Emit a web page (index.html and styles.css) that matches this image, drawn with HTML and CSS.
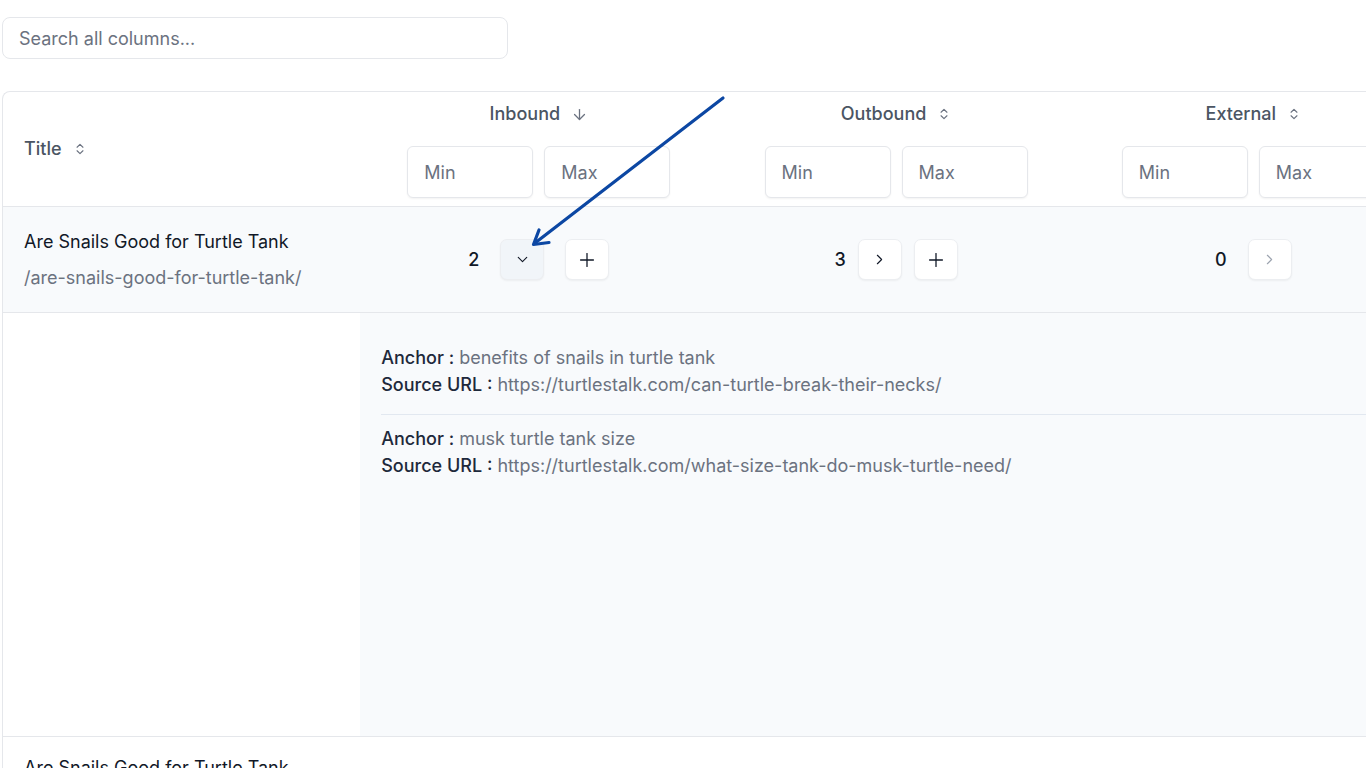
FILE: index.html
```html
<!DOCTYPE html>
<html lang="en">
<head>
    <meta charset="UTF-8">
    <meta name="viewport" content="width=device-width, initial-scale=1.0">
    <title>Internal Links</title>
    <link rel="stylesheet" href="styles.css">
</head>
<body>
    <div class="page">
        <!-- Search -->
        <div class="search-bar">
            <input type="text" class="search-input" placeholder="Search all columns...">
        </div>

        <!-- Links table -->
        <div class="table-wrap">
            <table class="links-table">
                <colgroup>
                    <col class="col-title">
                    <col class="col-num">
                    <col class="col-num">
                    <col class="col-num">
                </colgroup>
                <thead>
                    <tr>
                        <th class="th-title">
                            <span class="th-label">Title
                                <svg class="sort-icon" viewBox="0 0 24 24"><path d="m7 15 5 5 5-5"/><path d="m7 9 5-5 5 5"/></svg>
                            </span>
                        </th>
                        <th>
                            <div class="th-label">Inbound
                                <svg class="sort-icon active" viewBox="0 0 24 24"><path d="M12 5v14"/><path d="m19 12-7 7-7-7"/></svg>
                            </div>
                            <div class="range">
                                <input type="text" placeholder="Min">
                                <input type="text" placeholder="Max">
                            </div>
                        </th>
                        <th>
                            <div class="th-label">Outbound
                                <svg class="sort-icon" viewBox="0 0 24 24"><path d="m7 15 5 5 5-5"/><path d="m7 9 5-5 5 5"/></svg>
                            </div>
                            <div class="range">
                                <input type="text" placeholder="Min">
                                <input type="text" placeholder="Max">
                            </div>
                        </th>
                        <th>
                            <div class="th-label">External
                                <svg class="sort-icon" viewBox="0 0 24 24"><path d="m7 15 5 5 5-5"/><path d="m7 9 5-5 5 5"/></svg>
                            </div>
                            <div class="range">
                                <input type="text" placeholder="Min">
                                <input type="text" placeholder="Max">
                            </div>
                        </th>
                    </tr>
                </thead>
                <tbody>
                    <tr class="row-open">
                        <td class="cell-title">
                            <div class="post-title">Are Snails Good for Turtle Tank</div>
                            <div class="post-path">/are-snails-good-for-turtle-tank/</div>
                        </td>
                        <td>
                            <div class="count wide">
                                <span class="num">2</span>
                                <button class="icon-btn pressed"><svg viewBox="0 0 24 24"><path d="m6 9 6 6 6-6"/></svg></button>
                                <button class="icon-btn"><svg class="plus" viewBox="0 0 24 24"><path d="M5 12h14"/><path d="M12 5v14"/></svg></button>
                            </div>
                        </td>
                        <td>
                            <div class="count">
                                <span class="num">3</span>
                                <button class="icon-btn"><svg viewBox="0 0 24 24"><path d="m9 18 6-6-6-6"/></svg></button>
                                <button class="icon-btn"><svg class="plus" viewBox="0 0 24 24"><path d="M5 12h14"/><path d="M12 5v14"/></svg></button>
                            </div>
                        </td>
                        <td>
                            <div class="count wide">
                                <span class="num">0</span>
                                <button class="icon-btn disabled"><svg viewBox="0 0 24 24"><path d="m9 18 6-6-6-6"/></svg></button>
                            </div>
                        </td>
                    </tr>
                    <tr class="row-detail">
                        <td></td>
                        <td colspan="3" class="detail-cell">
                            <div class="detail-list">
                                <div class="link-item">
                                    <div><b>Anchor :</b> benefits of snails in turtle tank</div>
                                    <div><b>Source URL :</b> https://turtlestalk.com/can-turtle-break-their-necks/</div>
                                </div>
                                <div class="link-item">
                                    <div><b>Anchor :</b> musk turtle tank size</div>
                                    <div><b>Source URL :</b> https://turtlestalk.com/what-size-tank-do-musk-turtle-need/</div>
                                </div>
                            </div>
                        </td>
                    </tr>
                    <tr class="row-next">
                        <td class="cell-title">
                            <div class="post-title">Are Snails Good for Turtle Tank</div>
                        </td>
                        <td></td>
                        <td></td>
                        <td></td>
                    </tr>
                </tbody>
            </table>
        </div>
    </div>

    <!-- annotation arrow -->
    <svg class="annotation" viewBox="0 0 1366 768">
        <path d="M723 98 L535 243"/>
        <path d="M549 242.5 L533.5 244.5 L539 230"/>
    </svg>
</body>
</html>
```

FILE: styles.css
```css
body {
    margin: 0;
    font-family: 'Inter', 'Noto Sans', sans-serif;
    background: #fff;
    color: #111827;
    overflow: hidden;
    height: 768px;
}
.page {
    padding: 17px 0 0 2px;
}

/* search */
.search-bar {
    margin-bottom: 32px;
}
.search-input {
    box-sizing: border-box;
    width: 506px;
    height: 42px;
    padding: 0 16px;
    border: 1px solid #e5e7eb;
    border-radius: 8px;
    font-family: inherit;
    font-size: 18px;
    color: #111827;
    outline: none;
}
.search-input::placeholder {
    color: #6b7280;
}

/* table */
.table-wrap {
    border: 1px solid #e5e7eb;
    border-right: none;
    border-radius: 8px 0 0 0;
    overflow: hidden;
    width: 1430px;
}
.links-table {
    table-layout: fixed;
    border-collapse: collapse;
    width: 1429px;
}
.col-title { width: 357px; }
.col-num { width: 357px; }

.links-table th {
    padding: 10px 0 8px;
    font-weight: 500;
    vertical-align: top;
    border-bottom: 1px solid #e5e7eb;
}
.links-table th.th-title {
    vertical-align: middle;
    text-align: left;
    padding: 0 0 0 21px;
}
.th-label {
    display: inline-flex;
    align-items: center;
    gap: 11px;
    font-size: 18px;
    color: #4b5563;
    line-height: 24px;
}
.sort-icon {
    width: 14px;
    height: 14px;
    fill: none;
    stroke: #6b7280;
    stroke-width: 2;
    stroke-linecap: round;
    stroke-linejoin: round;
}
.sort-icon.active {
    width: 17px;
    height: 17px;
    stroke-width: 1.8;
}
.range {
    display: flex;
    justify-content: center;
    gap: 11px;
    margin-top: 20px;
}
.range input {
    box-sizing: border-box;
    width: 126px;
    height: 52px;
    padding: 0 16px;
    border: 1px solid #e5e7eb;
    border-radius: 6px;
    font-family: inherit;
    font-size: 18px;
    box-shadow: 0 1px 2px rgba(0, 0, 0, 0.05);
}
.range input::placeholder {
    color: #6b7280;
}

.links-table td {
    border-bottom: 1px solid #e5e7eb;
    vertical-align: middle;
    padding: 0;
}
.row-open td {
    background: #f8fafc;
    height: 105px;
}
.cell-title {
    padding-left: 21px !important;
}
.post-title {
    font-size: 18px;
    color: #111827;
    line-height: 24px;
}
.post-path {
    font-size: 18px;
    color: #6b7280;
    line-height: 24px;
    margin-top: 12px;
}

.count {
    display: flex;
    align-items: center;
    justify-content: center;
    gap: 12px;
}
.count.wide {
    gap: 21px;
}
.num {
    font-size: 18px;
    color: #111827;
    font-weight: 500;
}
.icon-btn {
    box-sizing: border-box;
    width: 44px;
    height: 41px;
    display: flex;
    align-items: center;
    justify-content: center;
    background: #fff;
    border: 1px solid #eceef1;
    border-radius: 7px;
    box-shadow: 0 1px 2px rgba(0, 0, 0, 0.05);
    padding: 0;
}
.icon-btn svg {
    width: 17px;
    height: 17px;
    fill: none;
    stroke: #111827;
    stroke-width: 1.6;
    stroke-linecap: round;
    stroke-linejoin: round;
}
.icon-btn svg.plus {
    width: 22px;
    height: 22px;
    stroke-width: 1.4;
}
.icon-btn.pressed {
    background: #f1f5f9;
}
.icon-btn.disabled svg {
    stroke: #9ca3af;
}

/* expanded detail */
.row-detail td {
    height: 423px;
    vertical-align: top;
    background: #fff;
}
.row-detail td.detail-cell {
    background: #f8fafc;
}
.detail-list {
    padding: 32px 0 0 21px;
}
.link-item {
    font-size: 18px;
    line-height: 26.5px;
    color: #6b7280;
    padding-bottom: 16px;
}
.link-item + .link-item {
    border-top: 1px solid #e2e8f0;
    padding-top: 11px;
}
.link-item b {
    font-weight: 500;
    color: #1e293b;
}

.row-next td {
    vertical-align: top;
    padding-top: 19px;
}

/* annotation overlay */
.annotation {
    position: absolute;
    left: 0;
    top: 0;
    width: 1366px;
    height: 768px;
    pointer-events: none;
    fill: none;
    stroke: #0c47a3;
    stroke-width: 3.2;
    stroke-linecap: round;
    stroke-linejoin: round;
}
```
